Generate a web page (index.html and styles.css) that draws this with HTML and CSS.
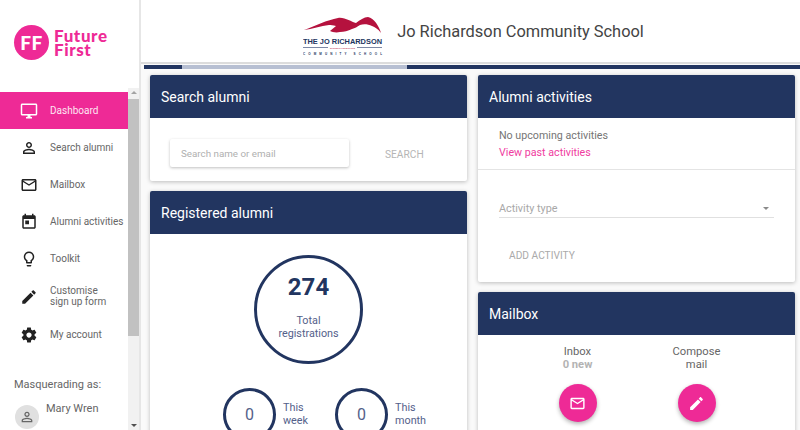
FILE: index.html
```html
<!DOCTYPE html>
<html lang="en">
<head>
  <meta charset="UTF-8" />
  <title>Future First - Dashboard</title>
  <link rel="stylesheet" href="styles.css">
</head>
<body>

<div class="sidebar">
  <div class="brand">
    <div class="brand-mark">FF</div>
    <div class="brand-name">Future<br>First</div>
  </div>

  <div class="side-scroll">
    <div class="side-content">
      <nav class="nav">
        <a class="nav-item active">
          <svg class="nav-icon" viewBox="0 0 24 24"><path d="M21 2H3c-1.1 0-2 .9-2 2v12c0 1.1.9 2 2 2h7v2H8v2h8v-2h-2v-2h7c1.1 0 2-.9 2-2V4c0-1.1-.9-2-2-2zm0 14H3V4h18v12z"/></svg>
          <span>Dashboard</span>
        </a>
        <a class="nav-item">
          <svg class="nav-icon" viewBox="0 0 24 24"><path d="M12 5.9c1.16 0 2.1.94 2.1 2.1s-.94 2.1-2.1 2.1S9.9 9.16 9.9 8s.94-2.1 2.1-2.1m0 9c2.97 0 6.1 1.46 6.1 2.1v1.1H5.9V17c0-.64 3.13-2.1 6.1-2.1M12 4C9.79 4 8 5.79 8 8s1.79 4 4 4 4-1.79 4-4-1.79-4-4-4zm0 9c-2.67 0-8 1.34-8 4v3h16v-3c0-2.66-5.33-4-8-4z"/></svg>
          <span>Search alumni</span>
        </a>
        <a class="nav-item">
          <svg class="nav-icon" viewBox="0 0 24 24"><path d="M20 4H4c-1.1 0-1.99.9-1.99 2L2 18c0 1.1.9 2 2 2h16c1.1 0 2-.9 2-2V6c0-1.1-.9-2-2-2zm0 14H4V8l8 5 8-5v10zm-8-7L4 6h16l-8 5z"/></svg>
          <span>Mailbox</span>
        </a>
        <a class="nav-item">
          <svg class="nav-icon" viewBox="0 0 24 24"><path d="M19 3h-1V1h-2v2H8V1H6v2H5c-1.11 0-1.99.9-1.99 2L3 19c0 1.1.89 2 2 2h14c1.1 0 2-.9 2-2V5c0-1.1-.9-2-2-2zm0 16H5V8h14v11zM7 10h5v5H7z"/></svg>
          <span>Alumni activities</span>
        </a>
        <a class="nav-item">
          <svg class="nav-icon" viewBox="0 0 24 24"><path d="M9 21c0 .55.45 1 1 1h4c.55 0 1-.45 1-1v-1H9v1zm3-19C8.14 2 5 5.14 5 9c0 2.38 1.19 4.47 3 5.74V17c0 .55.45 1 1 1h6c.55 0 1-.45 1-1v-2.26c1.81-1.27 3-3.36 3-5.74 0-3.86-3.14-7-7-7zm2.85 11.1l-.85.6V16h-4v-2.3l-.85-.6C7.8 12.16 7 10.63 7 9c0-2.76 2.24-5 5-5s5 2.24 5 5c0 1.63-.8 3.16-2.15 4.1z"/></svg>
          <span>Toolkit</span>
        </a>
        <a class="nav-item tall">
          <svg class="nav-icon" viewBox="0 0 24 24"><path d="M3 17.25V21h3.75L17.81 9.94l-3.75-3.75L3 17.25zM20.71 7.04c.39-.39.39-1.02 0-1.41l-2.34-2.34c-.39-.39-1.02-.39-1.41 0l-1.83 1.83 3.75 3.75 1.83-1.83z"/></svg>
          <span>Customise<br>sign up form</span>
        </a>
        <a class="nav-item">
          <svg class="nav-icon" viewBox="0 0 24 24"><path d="M19.43 12.98c.04-.32.07-.64.07-.98s-.03-.66-.07-.98l2.11-1.65c.19-.15.24-.42.12-.64l-2-3.46c-.12-.22-.39-.3-.61-.22l-2.49 1c-.52-.4-1.08-.73-1.69-.98l-.38-2.65C14.46 2.18 14.25 2 14 2h-4c-.25 0-.46.18-.49.42l-.38 2.65c-.61.25-1.17.59-1.69.98l-2.49-1c-.23-.09-.49 0-.61.22l-2 3.46c-.13.22-.07.49.12.64l2.11 1.65c-.04.32-.07.65-.07.98s.03.66.07.98l-2.11 1.65c-.19.15-.24.42-.12.64l2 3.46c.12.22.39.3.61.22l2.49-1c.52.4 1.08.73 1.69.98l.38 2.65c.03.24.24.42.49.42h4c.25 0 .46-.18.49-.42l.38-2.65c.61-.25 1.17-.59 1.69-.98l2.49 1c.23.09.49 0 .61-.22l2-3.46c.12-.22.07-.49-.12-.64l-2.11-1.65zM12 15.5c-1.93 0-3.5-1.57-3.5-3.5s1.57-3.5 3.5-3.5 3.5 1.57 3.5 3.5-1.57 3.5-3.5 3.5z"/></svg>
          <span>My account</span>
        </a>
      </nav>

      <div class="masq">
        <div class="masq-title">Masquerading as:</div>
        <div class="masq-user">
          <div class="avatar">
            <svg viewBox="0 0 24 24"><path d="M12 5.9c1.16 0 2.1.94 2.1 2.1s-.94 2.1-2.1 2.1S9.9 9.16 9.9 8s.94-2.1 2.1-2.1m0 9c2.97 0 6.1 1.46 6.1 2.1v1.1H5.9V17c0-.64 3.13-2.1 6.1-2.1M12 4C9.79 4 8 5.79 8 8s1.79 4 4 4 4-1.79 4-4-1.79-4-4-4zm0 9c-2.67 0-8 1.34-8 4v3h16v-3c0-2.66-5.33-4-8-4z"/></svg>
          </div>
          <div class="masq-name">Mary Wren</div>
        </div>
      </div>
    </div>

    <div class="scrollbar">
      <div class="arrow-up"></div>
      <div class="thumb"></div>
      <div class="arrow-down"></div>
    </div>
  </div>
</div>

<div class="main">
  <div class="top">
    <svg class="school-logo" viewBox="0 0 80 42">
      <path class="bird" d="M1 13 C12 9 24 3 35 1 C42 0 48 5 53 6 C57 3 61 0 65 0 C71 1 76 9 78 16 C75 12 72 10 69 9 C65 7 60 7 57 8 C54 10 52 11 49 12 C45 14 41 15 37 15 C33 16 29 15 27 14 C29 12 31 11 33 9 C30 8 28 8 26 8 C18 9 9 12 1 13 Z"/>
      <text class="logo-main" x="0" y="27" textLength="79" lengthAdjust="spacingAndGlyphs">THE JO RICHARDSON</text>
      <path class="logo-rule" d="M0 30.5 H25 M54 30.5 H79"/>
      <text class="logo-sub" x="27" y="32" textLength="25" lengthAdjust="spacingAndGlyphs">BUSINESS &amp; ENTERPRISE</text>
      <text class="logo-foot" x="0" y="37.5" textLength="79">COMMUNITY SCHOOL</text>
    </svg>
    <div class="school-name">Jo Richardson Community School</div>
  </div>

  <div class="progress">
    <div class="progress-a"></div>
    <div class="progress-b"></div>
    <div class="progress-c"></div>
  </div>

  <div class="grid">
    <div class="column">
      <section class="card">
        <h2 class="card-head">Search alumni</h2>
        <div class="search-row">
          <div class="search-input">Search name or email</div>
          <div class="search-btn">SEARCH</div>
        </div>
      </section>

      <section class="card">
        <h2 class="card-head">Registered alumni</h2>
        <div class="stats">
          <div class="ring-big">
            <div class="ring-num">274</div>
            <div class="ring-label">Total<br>registrations</div>
          </div>
          <div class="small-row">
            <div class="small-stat">
              <div class="ring-small">0</div>
              <div class="small-label">This<br>week</div>
            </div>
            <div class="small-stat">
              <div class="ring-small">0</div>
              <div class="small-label">This<br>month</div>
            </div>
          </div>
        </div>
      </section>
    </div>

    <div class="column">
      <section class="card">
        <h2 class="card-head">Alumni activities</h2>
        <div class="upcoming">
          <div>No upcoming activities</div>
          <a class="link">View past activities</a>
        </div>
        <div class="activity-form">
          <div class="select">
            <span>Activity type</span>
            <i class="select-arrow"></i>
          </div>
          <div class="add-btn">ADD ACTIVITY</div>
        </div>
      </section>

      <section class="card">
        <h2 class="card-head">Mailbox</h2>
        <div class="mail-row">
          <div class="mail-col">
            <div class="mail-label">Inbox<br><b>0 new</b></div>
            <div class="fab">
              <svg viewBox="0 0 24 24"><path d="M20 4H4c-1.1 0-1.99.9-1.99 2L2 18c0 1.1.9 2 2 2h16c1.1 0 2-.9 2-2V6c0-1.1-.9-2-2-2zm0 14H4V8l8 5 8-5v10zm-8-7L4 6h16l-8 5z"/></svg>
            </div>
          </div>
          <div class="mail-col">
            <div class="mail-label">Compose<br>mail</div>
            <div class="fab">
              <svg viewBox="0 0 24 24"><path d="M3 17.25V21h3.75L17.81 9.94l-3.75-3.75L3 17.25zM20.71 7.04c.39-.39.39-1.02 0-1.41l-2.34-2.34c-.39-.39-1.02-.39-1.41 0l-1.83 1.83 3.75 3.75 1.83-1.83z"/></svg>
            </div>
          </div>
        </div>
      </section>
    </div>
  </div>
</div>

</body>
</html>
```

FILE: styles.css
```css
* { box-sizing: border-box; }

html, body {
  height: 100%;
}

body {
  margin: 0;
  display: flex;
  overflow: hidden;
  font-family: Roboto, "Liberation Sans", sans-serif;
  background: #fafafa;
  color: #757575;
}

/* sidebar */
.sidebar {
  width: 141px;
  flex-shrink: 0;
  height: 100%;
  display: flex;
  flex-direction: column;
  background: white;
  border-right: 2px solid #e6e6e6;
}

.brand {
  height: 88px;
  flex-shrink: 0;
  padding: 25px 0 0 14px;
  display: flex;
  gap: 5px;
}

.brand-mark {
  width: 35px;
  height: 35px;
  border-radius: 50%;
  background: #ee2a96;
  color: white;
  font-family: Lato, sans-serif;
  font-weight: 900;
  font-size: 19px;
  letter-spacing: 0.5px;
  display: flex;
  align-items: center;
  justify-content: center;
}

.brand-name {
  color: #ee2a96;
  font-family: Lato, sans-serif;
  font-weight: 900;
  font-size: 17px;
  letter-spacing: 0.6px;
  line-height: 14px;
  padding-top: 4px;
}

.side-scroll {
  flex: 1;
  min-height: 0;
  display: flex;
}

.side-content {
  width: 128px;
  padding-top: 4px;
  overflow: hidden;
}

.nav-item {
  height: 37px;
  display: flex;
  align-items: center;
  gap: 12px;
  padding-left: 20px;
  font-size: 10px;
  line-height: 10.5px;
  color: #666;
}

.nav-item span {
  padding-top: 2px;
}

.nav-item.tall {
  height: 39px;
}

.nav-item.tall span {
  padding-top: 0;
}

.nav-item.active {
  background: #ee2a96;
  color: #fde6f2;
}

.nav-icon {
  width: 18px;
  height: 18px;
  flex-shrink: 0;
  fill: #222;
}

.nav-item.active .nav-icon {
  fill: white;
}

.masq {
  padding: 25px 0 0 14px;
}

.masq-title {
  font-size: 11px;
  line-height: 14px;
  color: #666;
}

.masq-user {
  display: flex;
  gap: 7px;
  margin-top: 9px;
}

.avatar {
  width: 24px;
  height: 24px;
  margin: 4px 0 0 1px;
  border-radius: 50%;
  background: #e0e0e0;
  display: flex;
  align-items: center;
  justify-content: center;
}

.avatar svg {
  width: 16px;
  height: 16px;
  fill: #666;
}

.masq-name {
  padding-top: 1px;
  font-size: 11px;
  line-height: 14px;
  color: #666;
}

.scrollbar {
  width: 11px;
  background: #f1f1f1;
  display: flex;
  flex-direction: column;
  align-items: center;
}

.thumb {
  width: 100%;
  height: 237px;
  margin-top: 5px;
  background: #c1c1c1;
}

.arrow-up,
.arrow-down {
  width: 0;
  height: 0;
  border-left: 3px solid transparent;
  border-right: 3px solid transparent;
}

.arrow-up {
  margin-top: 3px;
  border-bottom: 3px solid #a3a3a3;
}

.arrow-down {
  margin-top: auto;
  margin-bottom: 3px;
  border-top: 3px solid #505050;
}

/* main area */
.main {
  flex: 1;
  min-width: 0;
  height: 100%;
  overflow: hidden;
}

.top {
  height: 64px;
  background: white;
  border-bottom: 2px solid #dcdcdc;
  display: flex;
  align-items: center;
  justify-content: center;
  gap: 14px;
  padding-left: 6px;
}

.school-logo {
  width: 80px;
  height: 42px;
  margin-top: 17px;
  align-self: flex-start;
}

.bird { fill: #b5123e; }

.logo-main {
  font-family: "Liberation Sans", sans-serif;
  font-weight: bold;
  font-size: 6.5px;
  fill: #223560;
}

.logo-rule {
  stroke: #5b6a8e;
  stroke-width: 0.8;
}

.logo-sub {
  font-family: "Liberation Sans", sans-serif;
  font-size: 2px;
  fill: #b5123e;
}

.logo-foot {
  font-family: "Liberation Sans", sans-serif;
  font-weight: bold;
  font-size: 3px;
  fill: #223560;
}

.school-name {
  font-size: 16.4px;
  color: #444;
}

.progress {
  height: 4px;
  margin: 1px 0 0 3px;
  display: flex;
}

.progress-a { width: 38px; background: #223560; }
.progress-b { width: 225px; background: #b7bfd2; }
.progress-c { flex: 1; background: #223560; }

.grid {
  display: grid;
  grid-template-columns: 317px 317px;
  gap: 11px;
  padding: 6px 0 0 9px;
  align-items: start;
}

.column {
  display: flex;
  flex-direction: column;
  gap: 10px;
}

.card {
  background: white;
  border-radius: 2px;
  box-shadow: 0 1px 4px rgba(0,0,0,0.25);
}

.card-head {
  margin: 0;
  height: 43px;
  padding-left: 11px;
  background: #223560;
  color: white;
  font-size: 14px;
  font-weight: 400;
  line-height: 45px;
  border-radius: 2px 2px 0 0;
}

/* search */
.search-row {
  height: 63px;
  padding: 21px 0 0 20px;
  display: flex;
}

.search-input {
  width: 179px;
  height: 28px;
  padding-left: 11px;
  font-size: 9.8px;
  line-height: 29px;
  color: #b0b0b0;
  box-shadow: 0 1px 3px rgba(0,0,0,0.25);
  border-radius: 2px;
}

.search-btn {
  margin-left: 36px;
  font-size: 10.2px;
  line-height: 31px;
  color: #b5b5b5;
}

/* registered */
.stats {
  height: 300px;
  padding-top: 21px;
}

.ring-big {
  width: 109px;
  height: 109px;
  margin-left: 104px;
  border: 3px solid #223560;
  border-radius: 50%;
  text-align: center;
  padding-top: 14px;
}

.ring-num {
  font-size: 24px;
  font-weight: 700;
  line-height: 30px;
  color: #223560;
}

.ring-label {
  margin-top: 13px;
  font-size: 10.8px;
  line-height: 12.5px;
  color: #54618a;
}

.small-row {
  display: flex;
  margin: 24px 0 0 73px;
}

.small-stat {
  width: 112px;
  display: flex;
  gap: 7px;
}

.ring-small {
  width: 53px;
  height: 53px;
  flex-shrink: 0;
  border: 3px solid #223560;
  border-radius: 50%;
  font-size: 16px;
  line-height: 47px;
  text-align: center;
  color: #54618a;
}

.small-label {
  padding-top: 13px;
  font-size: 10.8px;
  line-height: 13px;
  color: #54618a;
}

/* activities */
.upcoming {
  height: 52px;
  padding: 9px 0 0 21px;
  font-size: 10.7px;
  line-height: 17px;
  color: #757575;
  border-bottom: 1px solid #e4e4e4;
}

.link {
  display: block;
  color: #f03ba0;
}

.activity-form {
  height: 112px;
  padding: 28px 21px 0;
}

.select {
  height: 20px;
  padding-top: 2px;
  display: flex;
  justify-content: space-between;
  align-items: center;
  font-size: 10.8px;
  color: #a8a8a8;
  border-bottom: 1px solid #e0e0e0;
}

.select-arrow {
  width: 0;
  height: 0;
  margin-right: 5px;
  border-left: 3px solid transparent;
  border-right: 3px solid transparent;
  border-top: 3px solid #8a8a8a;
}

.add-btn {
  margin: 26px 0 0 10px;
  font-size: 10.2px;
  line-height: 24px;
  color: #aaa;
}

/* mailbox */
.mail-row {
  height: 140px;
  padding-top: 11px;
  display: flex;
}

.mail-col {
  width: 119px;
  display: flex;
  flex-direction: column;
  align-items: center;
}

.mail-col:first-child {
  margin-left: 40px;
}

.mail-label {
  height: 38px;
  font-size: 11.2px;
  line-height: 12.5px;
  text-align: center;
  color: #666;
}

.mail-label b {
  color: #b3b3b3;
}

.fab {
  width: 38px;
  height: 38px;
  border-radius: 50%;
  background: #ee2a96;
  box-shadow: 0 2px 4px rgba(0,0,0,0.3);
  display: flex;
  align-items: center;
  justify-content: center;
}

.fab svg {
  width: 17px;
  height: 17px;
  fill: white;
}
```
